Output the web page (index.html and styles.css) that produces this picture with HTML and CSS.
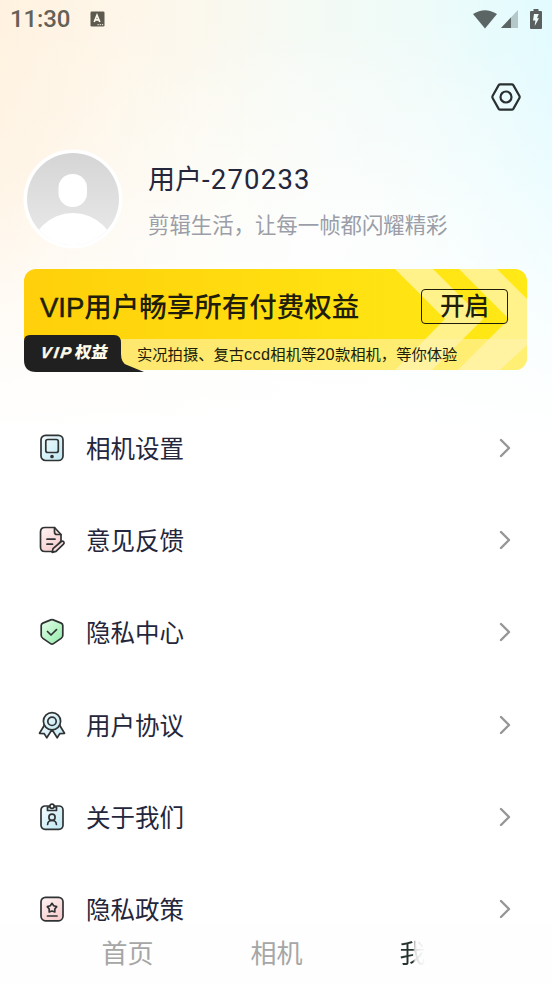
FILE: index.html
```html
<!DOCTYPE html>
<html lang="zh-CN">
<head>
<meta charset="utf-8">
<meta name="viewport" content="width=device-width, initial-scale=1">
<title>我的</title>
<link rel="stylesheet" href="styles.css">
</head>
<body>
<div class="screen">
  <header class="status">
    <span class="clock">11:30</span>
    <svg class="ime" width="15" height="16" viewBox="0 0 15 16"><rect x="0.5" y="0.5" width="14" height="15" rx="1.3" fill="#5d5b50"/><path d="M4.2 11 7 4.2 9.800 11M5.200 8.900h3.700" fill="none" stroke="#fff9ec" stroke-width="1.700"/><path d="M7.500 13.700h1.300m.9 0H11m.9 0h1.300" stroke="#fff9ec" stroke-width="1"/></svg>
    <div class="status-icons">
      <svg width="24" height="19" viewBox="0 0 24 19"><path d="M0 4Q12-3.700 24 4L12 18.500Z" fill="#5a6564"/></svg>
      <svg width="17" height="18" viewBox="0 0 17 18"><path d="M17 0V18H0Z" fill="#b4c8c9"/><path d="M10 7.400V18H0Z" fill="#5a6564"/></svg>
      <svg class="battery" width="12" height="20" viewBox="0 0 12 20"><path d="M3.500 0h5v2H11q1 0 1 1v16q0 1-1 1H1q-1 0-1-1V3q0-1 1-1h2.500Z" fill="#59605f"/><path d="M4 5h4.800L7 9.200h2L4.700 17l.7-5.500H3Z" fill="#effcfc"/></svg>
    </div>
  </header>

  <div class="toolbar">
    <svg width="30" height="28" viewBox="0 0 30 28" fill="none" stroke="#2a3030" stroke-width="2.200" stroke-linejoin="round"><path d="M9.200 1.300h11.600q1 0 1.500.8l6 10.700q.7 1.200 0 2.400l-6 10.700q-.5.800-1.500.8H9.200q-1 0-1.500-.8l-6-10.700q-.7-1.200 0-2.400l6-10.700q.5-.8 1.500-.8Z"/><circle cx="15" cy="14" r="5.500"/></svg>
  </div>

  <section class="profile">
    <svg class="avatar" width="100" height="100" viewBox="0 0 100 100">
      <defs>
        <linearGradient id="face" x1="0" y1="0" x2="0" y2="1"><stop offset="0" stop-color="#d4d4d5"/><stop offset=".8" stop-color="#e6e6e7"/></linearGradient>
        <clipPath id="round"><circle cx="50" cy="50" r="46"/></clipPath>
      </defs>
      <circle cx="50" cy="50" r="49.500" fill="#fff"/>
      <g clip-path="url(#round)"><rect width="100" height="100" fill="url(#face)"/><rect x="35.500" y="25" width="28.500" height="33" rx="14" fill="#fff"/><circle cx="50" cy="107" r="43" fill="#fff"/></g>
      <path d="M18 83a46 46 0 0 0 64 0L72 91H28Z" fill="#fff"/>
    </svg>
    <div class="who">
      <h1>用户<span>-270233</span></h1>
      <p>剪辑生活，让每一帧都闪耀精彩</p>
    </div>
  </section>

  <section class="banner">
    <svg class="banner-art" width="503" height="103" viewBox="0 0 503 103">
      <defs>
        <linearGradient id="gold"><stop offset="0" stop-color="#ffd00b"/><stop offset=".6" stop-color="#ffe010"/><stop offset="1" stop-color="#ffe916"/></linearGradient>
        <clipPath id="card"><rect width="503" height="101" rx="12"/></clipPath>
      </defs>
      <g clip-path="url(#card)">
        <rect width="503" height="101" fill="url(#gold)"/>
        <path d="M371 0h38l50 50-51 51h-37l50-51ZM435 0h38l30 30v46l-27 25h-42l51-51Z" fill="#fff28a"/>
        <path d="M0 70h503v31H0Z" fill="#fff4b0" fill-opacity=".6"/>
      </g>
      <path d="M0 72q0-6 6-6h84q7 0 7 8v11q0 9 6 11l17 7H12q-12 0-12-12Z" fill="#202020"/>
    </svg>
    <div class="banner-main"><h2>VIP<span>用户畅享所有付费权益</span></h2><a class="open">开启</a></div>
    <div class="banner-foot"><span class="tag"><i>VIP</i>权益</span><span class="note">实况拍摄、复古<b>ccd</b>相机等<b>20</b>款相机，等你体验</span></div>
  </section>

  <svg width="0" height="0" class="defs">
    <defs>
      <linearGradient id="blue" x2="1" y2="1"><stop stop-color="#f5fcff"/><stop offset="1" stop-color="#bde7f2"/></linearGradient>
      <linearGradient id="pink" x2=".6" y2="1"><stop stop-color="#fff5f5"/><stop offset="1" stop-color="#f7cdce"/></linearGradient>
      <linearGradient id="green" x2="1" y2="1"><stop stop-color="#e5ffeb"/><stop offset="1" stop-color="#91eba8"/></linearGradient>
      <symbol id="chev" viewBox="0 0 12 20"><path d="M2 2l8 8-8 8" fill="none" stroke="#969696" stroke-width="2.400" stroke-linecap="round" stroke-linejoin="round"/></symbol>
    </defs>
  </svg>

  <main class="menu">
    <a class="row">
      <svg class="icon" viewBox="0 0 28 28"><rect x="3" y="1.300" width="22" height="25.200" rx="4.500" fill="url(#blue)"/><rect x="7.800" y="5.500" width="12.500" height="13" rx="2"/><circle cx="14" cy="22.500" r="1" fill="#303334"/></svg>
      <span>相机设置</span><svg class="chev"><use href="#chev"/></svg>
    </a>
    <a class="row">
      <svg class="icon" viewBox="0 0 28 28"><path d="M7 1.500h9.500l6.500 7V15l-8 10.500H7q-4.500 0-4.500-4.500V6q0-4.500 4.500-4.500Z" fill="url(#pink)"/><path d="M16.500 1.500V6q0 2.500 2.500 2.500h4M9 13.200h8M9 18.200h5.500"/><path d="M23.300 15.500q1.300-1 2.400.2 1 1.200-.2 2.400l-7.500 7.300-3.800 1 .8-3.800Z" fill="url(#pink)"/></svg>
      <span>意见反馈</span><svg class="chev"><use href="#chev"/></svg>
    </a>
    <a class="row">
      <svg class="icon" viewBox="0 0 28 28"><path d="M12.800 1.900q1.200-.5 2.400 0l8 3.200q1.600.7 1.600 2.400v9.700q0 2-1.700 3.200L15.500 25.600q-1.500 1-3 0L4.900 20.400q-1.700-1.200-1.700-3.200V7.500q0-1.700 1.600-2.400Z" fill="url(#green)"/><path d="m9.500 13.500 3.500 3.500 5.500-5.300"/></svg>
      <span>隐私中心</span><svg class="chev"><use href="#chev"/></svg>
    </a>
    <a class="row">
      <svg class="icon" viewBox="0 0 28 28"><path d="m6.500 14-5 8.300 4.700.3 2.600 4.200L14 18.500l5.200 8.300 2.600-4.200 4.700-.3-5-8.300Z" fill="url(#blue)"/><circle cx="14" cy="10.300" r="8.600" fill="url(#blue)"/><circle cx="14" cy="10.300" r="4.200"/></svg>
      <span>用户协议</span><svg class="chev"><use href="#chev"/></svg>
    </a>
    <a class="row">
      <svg class="icon" viewBox="0 0 28 28"><rect x="3" y="3" width="22" height="23.300" rx="4" fill="url(#blue)"/><path d="M9.500 4v3.500h9V4h-2M9.500 4h2" fill="#dff5fa"/><circle cx="14" cy="3.200" r="2.100" fill="#fff"/><circle cx="14" cy="14.300" r="3.100"/><path d="M9.600 21.500q.2-4 4.400-4 4.200 0 4.400 4"/></svg>
      <span>关于我们</span><svg class="chev"><use href="#chev"/></svg>
    </a>
    <a class="row">
      <svg class="icon" viewBox="0 0 28 28"><rect x="3" y="2.300" width="22" height="23.500" rx="4.500" fill="url(#pink)"/><path d="m14 8.300 1.700 2.400 3 .9-1.900 2.400v3L14 16l-2.800 1v-3l-1.900-2.400 3-.9ZM9.500 21h9.500"/></svg>
      <span>隐私政策</span><svg class="chev"><use href="#chev"/></svg>
    </a>
  </main>

  <nav class="tabs"><a>首页</a><a>相机</a><a class="active">我的</a></nav>
</div>
</body>
</html>
```

FILE: styles.css
```css
* { box-sizing: border-box; }
body { margin: 0; font-family: Roboto, "Noto Sans CJK SC", sans-serif; color: #24263c; }
h1, h2, p { margin: 0; font-weight: 400; }
svg { display: block; flex: none; }
.defs { position: absolute; }
.screen {
  width: 552px; height: 983px; overflow: hidden;
  display: flex; flex-direction: column;
  background:
    linear-gradient(180deg, rgba(255,255,255,0) 0, rgba(255,255,255,.2) 180px, rgba(255,255,255,.8) 340px, #fff 440px),
    radial-gradient(ellipse 330px 220px at 330px 240px, rgba(255,255,255,.7), rgba(255,255,255,0)),
    linear-gradient(90deg, #fff2e0 0, #fef6e8 110px, #fbf8ed 200px, #f5faf4 300px, #eefbf9 420px, #e2fbff 552px);
}
.status { height: 38px; display: flex; align-items: center; padding: 0 10px; flex: none; }
.clock { font-size: 24px; font-weight: 500; line-height: 38px; color: #656156; width: 80px; letter-spacing: -.1px; }
.ime { margin-top: -1px; }
.status-icons { margin-left: auto; display: flex; align-items: center; gap: 4px; }
.battery { margin-left: 8px; }
.toolbar { height: 111px; flex: none; display: flex; justify-content: flex-end; padding: 45px 31px 0 0; }
.profile { height: 120px; flex: none; display: flex; padding-left: 23px; }
.who { padding: 12px 0 0 25px; white-space: nowrap; }
h1 { font-size: 27px; line-height: 38px; }
h1 span { font-size: 27.500px; letter-spacing: 1.200px; }
.who p { font-size: 21.400px; line-height: 32px; margin-top: 11px; color: #9b9ea8; }
.banner { position: relative; width: 503px; height: 103px; margin-left: 24px; flex: none; color: #201d0b; }
.banner-art { position: absolute; inset: 0; }
.banner-main { position: relative; height: 70px; display: flex; align-items: center; justify-content: space-between; padding: 7px 19px 0 16px; }
h2 { font-family: "Liberation Sans", "Noto Sans CJK SC", sans-serif; font-size: 27.500px; line-height: 40px; font-weight: 500; -webkit-text-stroke: .5px; white-space: nowrap; }
h2 span { -webkit-text-stroke: 0; }
.open { width: 87px; height: 35px; border: 1.500px solid #201d0b; border-radius: 4px; font-size: 24.500px; font-weight: 500; line-height: 34px; text-align: center; margin-top: -2px; }
.banner-foot { position: relative; height: 28px; display: flex; align-items: center; }
.tag { display: flex; align-items: center; width: 113px; padding-left: 17px; color: #fffbea; font-size: 16.500px; font-weight: 900; transform: skewX(-8deg); line-height: 28px; white-space: nowrap; }
.tag i { font-family: "Liberation Sans", sans-serif; font-size: 15.500px; width: 34px; letter-spacing: 2.500px; font-weight: 700; -webkit-text-stroke: .5px; }
.note { font-family: "Noto Sans CJK SC", sans-serif; font-size: 15.300px; line-height: 28px; white-space: nowrap; }
.note b { font-family: "Liberation Sans", sans-serif; font-weight: 400; font-size: 16.300px; letter-spacing: .3px; }
.menu { flex: none; height: 562px; margin-top: 31px; padding: 0 41px 0 38px; }
.row { height: 92.200px; display: flex; align-items: center; font-size: 24.500px; }
.row span { margin: -3px 0 0 20px; flex: 1; }
.icon { width: 28px; height: 28px; margin-top: -2px; fill: none; stroke: #303334; stroke-width: 1.700; stroke-linejoin: round; stroke-linecap: round; }
.chev { width: 12px; height: 20px; margin-top: -2px; }
.tabs {
  position: relative; height: 60px; margin-top: -42px; flex: none;
  display: grid; grid-template-columns: repeat(3, 149px); padding-left: 53px;
  background: #fefefe; font-size: 26px; line-height: 63px; text-align: center; color: #a6a6a6;
}
.tabs .active {
  color: transparent;
  background: linear-gradient(90deg, #25332f 62px, rgba(37,51,47,.15) 64px, rgba(37,51,47,0) 76px);
  -webkit-background-clip: text; background-clip: text;
}
```
